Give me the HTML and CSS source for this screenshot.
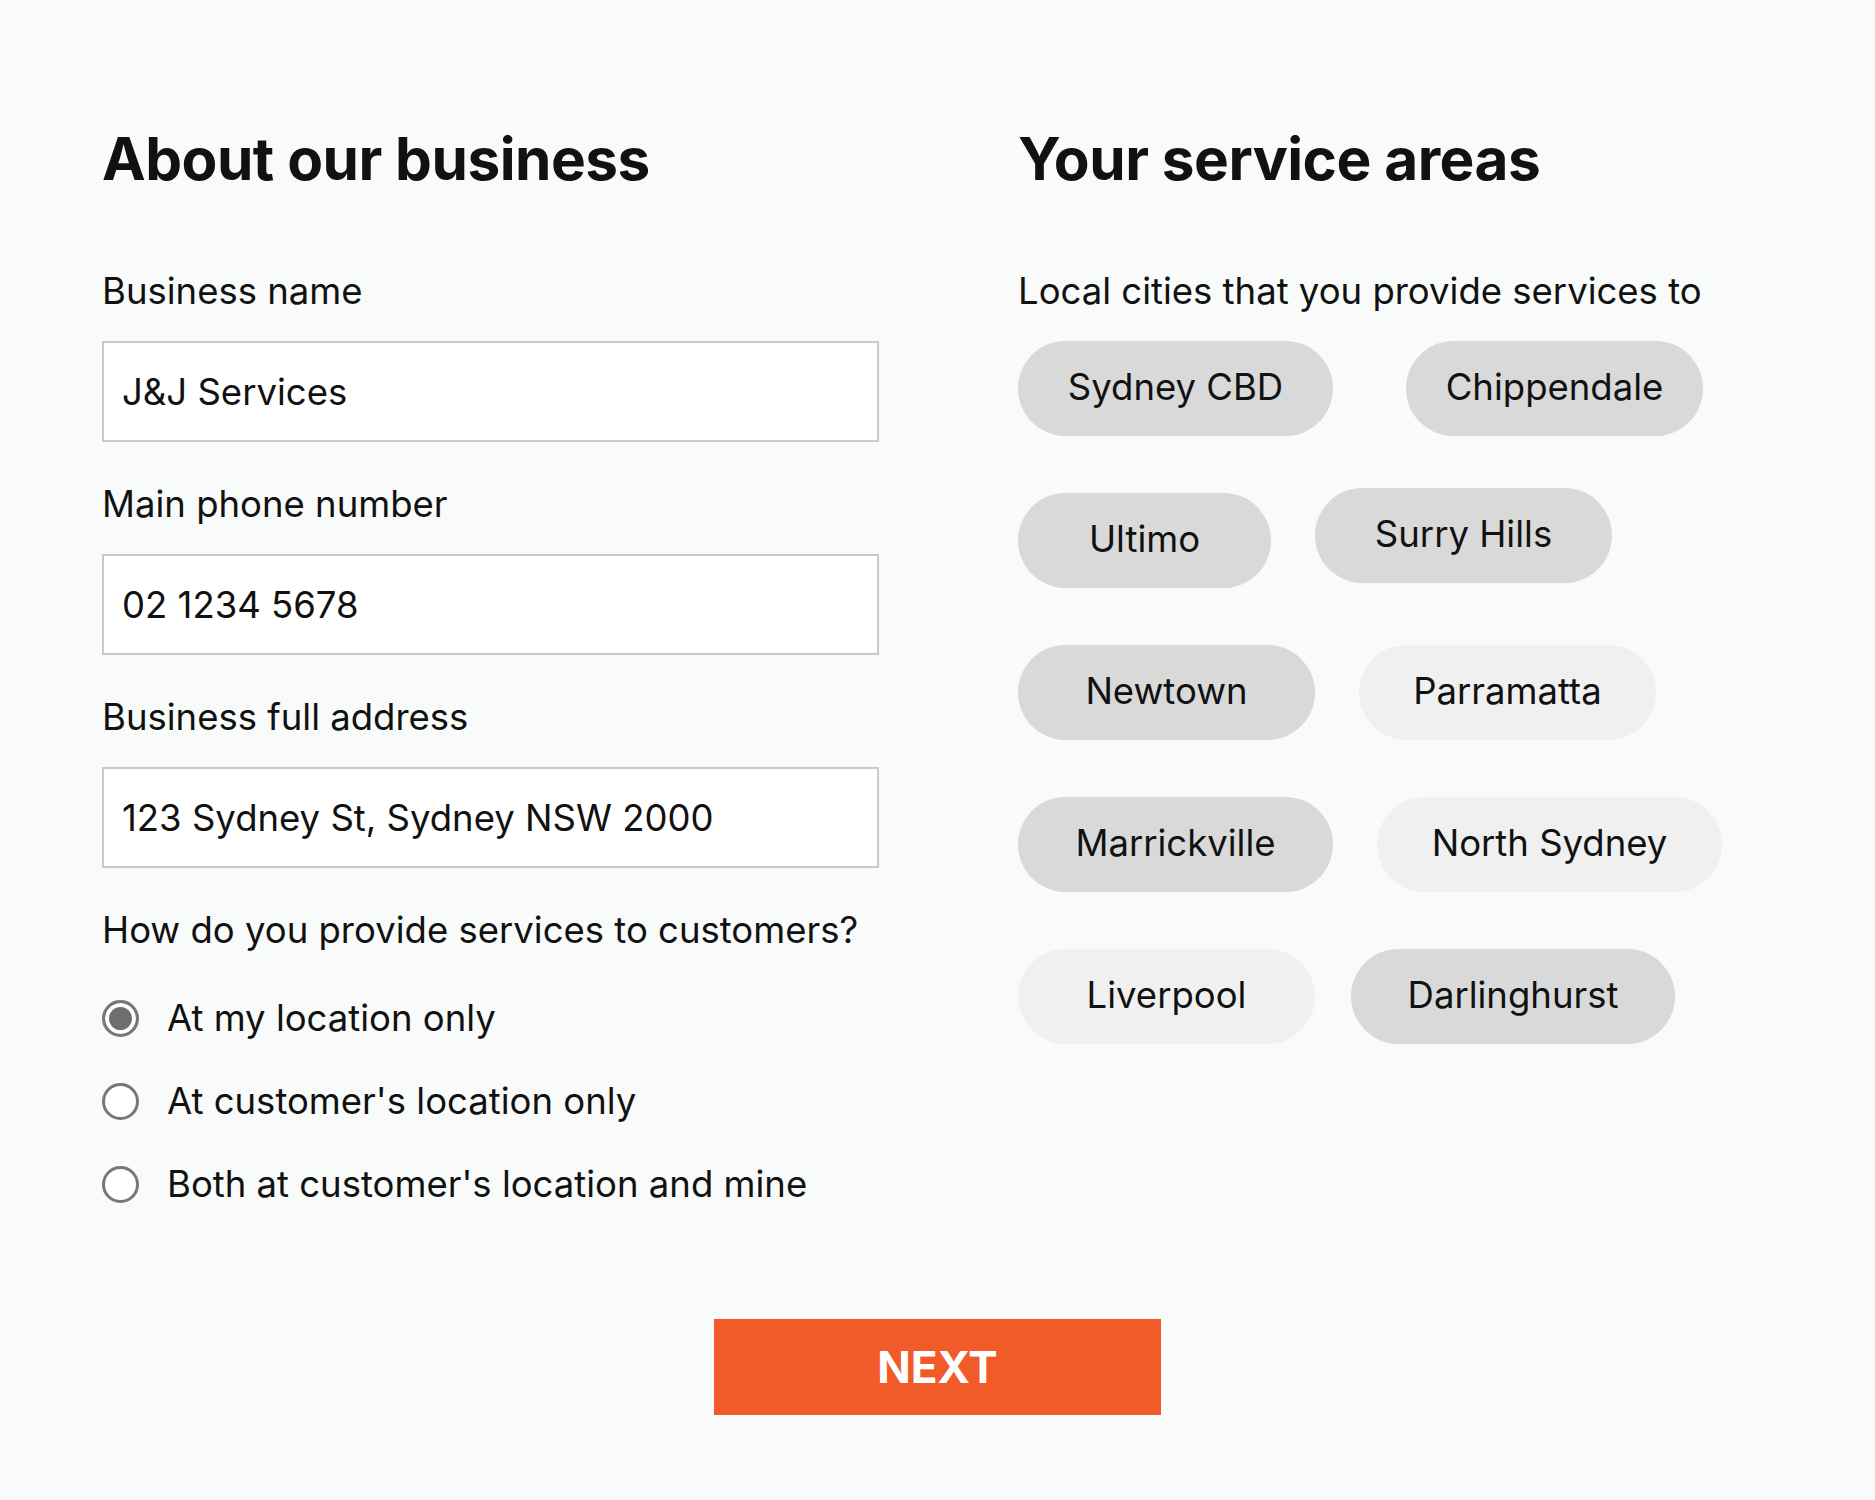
FILE: index.html
```html
<!DOCTYPE html>
<html>
<head>
    <title>Business details</title>
    <link rel="stylesheet" href="styles.css">
</head>
<body>

    <div class="page">
        <div class="columns">
            <div class="about">
                <h1>About our business</h1>

                <div class="field">
                    <label for="bname">Business name</label>
                    <input id="bname" type="text" value="J&amp;J Services">
                </div>
                <div class="field">
                    <label for="phone">Main phone number</label>
                    <input id="phone" type="text" value="02 1234 5678">
                </div>
                <div class="field">
                    <label for="address">Business full address</label>
                    <input id="address" type="text" value="123 Sydney St, Sydney NSW 2000">
                </div>

                <p class="question">How do you provide services to customers?</p>
                <div class="options">
                    <label class="option"><input type="radio" name="mode" checked> At my location only</label>
                    <label class="option"><input type="radio" name="mode"> At customer's location only</label>
                    <label class="option"><input type="radio" name="mode"> Both at customer's location and mine</label>
                </div>
            </div>

            <div class="areas">
                <h1>Your service areas</h1>
                <p class="subtitle">Local cities that you provide services to</p>

                <div class="chips">
                    <div class="row wide">
                        <button class="chip lg">Sydney CBD</button>
                        <button class="chip md">Chippendale</button>
                    </div>
                    <div class="row">
                        <button class="chip sm">Ultimo</button>
                        <button class="chip md raised">Surry Hills</button>
                    </div>
                    <div class="row">
                        <button class="chip md">Newtown</button>
                        <button class="chip md off">Parramatta</button>
                    </div>
                    <div class="row">
                        <button class="chip lg">Marrickville</button>
                        <button class="chip xl off">North Sydney</button>
                    </div>
                    <div class="row tight">
                        <button class="chip md off">Liverpool</button>
                        <button class="chip xxl">Darlinghurst</button>
                    </div>
                </div>
            </div>
        </div>

        <div class="actions">
            <button class="next">NEXT</button>
        </div>
    </div>

</body>
</html>
```

FILE: styles.css
```css
body {
    margin: 0;
    background-color: #f9fafa;
    font-family: "Inter", "Liberation Sans", sans-serif;
    color: #111;
}

.page {
    padding: 123px 0 0 102px;
}

.columns {
    display: flex;
    gap: 139px;
}

.about {
    width: 777px;
}

h1 {
    margin: 0 0 75px 0;
    font-size: 58.5px;
    line-height: 72px;
    font-weight: 700;
    letter-spacing: -0.5px;
}

.field {
    margin-bottom: 41px;
}

.field label,
.question,
.subtitle {
    display: block;
    margin: 0 0 29px 0;
    font-size: 36.5px;
    line-height: 42px;
}

input[type="text"] {
    display: block;
    box-sizing: border-box;
    width: 777px;
    height: 101px;
    padding: 0 18px;
    border: 2px solid #c9c9c9;
    background-color: white;
    font-family: inherit;
    font-size: 36.5px;
    color: #111;
    outline: none;
}

.question {
    margin-bottom: 46px;
}

.options {
    display: flex;
    flex-direction: column;
    gap: 41px;
}

.option {
    display: flex;
    align-items: center;
    gap: 28px;
    font-size: 36.5px;
    line-height: 42px;
}

.option input {
    appearance: none;
    box-sizing: border-box;
    width: 37px;
    height: 37px;
    margin: 0;
    border: 3px solid #777;
    border-radius: 50%;
    background-color: white;
}

.option input:checked {
    background-color: #6f6f6f;
    box-shadow: inset 0 0 0 4px white;
}

/* service areas */

.chips {
    display: flex;
    flex-direction: column;
    gap: 57px;
}

.row {
    display: flex;
    align-items: flex-start;
    gap: 44px;
}

.row.wide {
    gap: 73px;
}

.row.tight {
    gap: 36px;
}

.chip {
    height: 95px;
    padding: 0 0 4px 0;
    border: none;
    border-radius: 48px;
    background-color: #d9d9d9;
    font-family: inherit;
    font-size: 36.5px;
    color: #111;
    cursor: pointer;
}

.chip.off {
    background-color: #f0f0f0;
}

.chip.raised {
    margin-top: -5px;
}

.sm { width: 253px; }
.md { width: 297px; }
.lg { width: 315px; }
.xxl { width: 324px; }
.xl { width: 345px; }

.actions {
    display: flex;
    justify-content: center;
    padding: 114px 102px 0 0;
}

.next {
    width: 447px;
    height: 96px;
    border: none;
    background-color: #f15a29;
    color: white;
    font-family: inherit;
    font-size: 44px;
    font-weight: 700;
    cursor: pointer;
}
```
